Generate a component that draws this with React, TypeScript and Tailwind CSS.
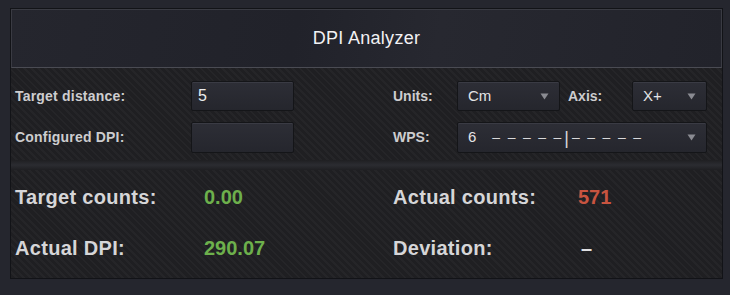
import React from 'react'

const stripes =
  'bg-[repeating-linear-gradient(45deg,#1f1f22_0px,#1f1f22_3px,#252528_3px,#252528_5px)]'

const fieldBox =
  'h-full rounded-[2px] border border-[#141518] bg-[linear-gradient(#2d2e36,#25262d)] shadow-[inset_0_1px_0_#3a3b44]'

const Caret = () => (
  <svg width="9" height="7" viewBox="0 0 9 7" className="shrink-0">
    <path d="M0.5 0.5 L8.5 0.5 L4.5 6.5 Z" fill="#8a8b92" />
  </svg>
)

const Select = ({ value, width, children }: { value: string; width: string; children?: React.ReactNode }) => (
  <div className={`${fieldBox} ${width} flex items-center pl-[10px] pr-[10px]`}>
    <span className="text-[15px] text-[#e4e4e6]">{value}</span>
    {children}
    <div className="flex-1" />
    <Caret />
  </div>
)

const Dashes = () => (
  <span className="flex gap-[7.5px]">
    {[0, 1, 2, 3, 4].map((i) => (
      <span key={i}>–</span>
    ))}
  </span>
)

export default function App() {
  return (
    <div
      className="w-[730px] h-[295px] bg-[#25262e] pt-[8px] pl-[10px]"
      style={{ fontFamily: '"Liberation Sans", Arial, sans-serif' }}
    >
      <div className="w-[713px] h-[271px] flex flex-col border border-[#121317] bg-[#1f1f22]">
        {/* header */}
        <div className="h-[59px] shrink-0 flex items-center justify-center bg-[linear-gradient(100deg,#25262e,#21222a_40%,#272830_60%,#22232b)] border border-[#3a3b43] border-b-[#4a4b53]">
          <span className="text-[18px] tracking-[0.3px] text-[#f2f2f4]">DPI Analyzer</span>
        </div>

        {/* settings */}
        <div className={`${stripes} h-[92px] shrink-0 flex flex-col gap-[11px] pt-[13px] text-[#cdcdcf]`}>
          <div className="h-[30px] flex items-center">
            <span className="w-[180px] pl-[4px] text-[14px] font-bold tracking-[0.2px]">Target distance:</span>
            <div className={`${fieldBox} w-[103px] flex items-center pl-[6px]`}>
              <span className="text-[16px] text-[#ececee]">5</span>
            </div>
            <span className="w-[163px] pl-[99px] text-[14px] font-bold">Units:</span>
            <Select value="Cm" width="w-[103px]" />
            <span className="w-[72px] pl-[8px] text-[14px] font-bold">Axis:</span>
            <Select value="X+" width="w-[75px]" />
          </div>
          <div className="h-[31px] flex items-center">
            <span className="w-[180px] pl-[4px] text-[14px] font-bold tracking-[0.2px]">Configured DPI:</span>
            <div className={`${fieldBox} w-[103px]`} />
            <span className="w-[163px] pl-[99px] text-[14px] font-bold">WPS:</span>
            <Select value="6" width="w-[250px]">
              <span className="ml-[16px] flex items-center text-[14px] text-[#d8d8da]">
                <Dashes />
                <span className="text-[18px] leading-none mx-[3px]">|</span>
                <Dashes />
              </span>
            </Select>
          </div>
        </div>

        {/* divider */}
        <div className="h-[10px] shrink-0 bg-[linear-gradient(#1f1f22,#2b2c31_50%,#1f1f22)]" />

        {/* results */}
        <div className={`${stripes} flex-1 grid grid-cols-[193px_189px_185px_1fr] grid-rows-[51px_51px] pt-[1px] content-start text-[20px] font-bold`}>
          <div className="flex items-center pl-[4px] text-[#d6d6d8] tracking-[0.3px]">Target counts:</div>
          <div className="flex items-center text-[#6db04c]">0.00</div>
          <div className="flex items-center text-[#d6d6d8] tracking-[0.3px]">Actual counts:</div>
          <div className="flex items-center text-[#c85440]">571</div>
          <div className="flex items-center pl-[4px] text-[#d6d6d8] tracking-[0.3px]">Actual DPI:</div>
          <div className="flex items-center text-[#6db04c]">290.07</div>
          <div className="flex items-center text-[#d6d6d8] tracking-[0.3px]">Deviation:</div>
          <div className="flex items-center pl-[3px] text-[#e0e0e2]">–</div>
        </div>
      </div>
    </div>
  )
}
